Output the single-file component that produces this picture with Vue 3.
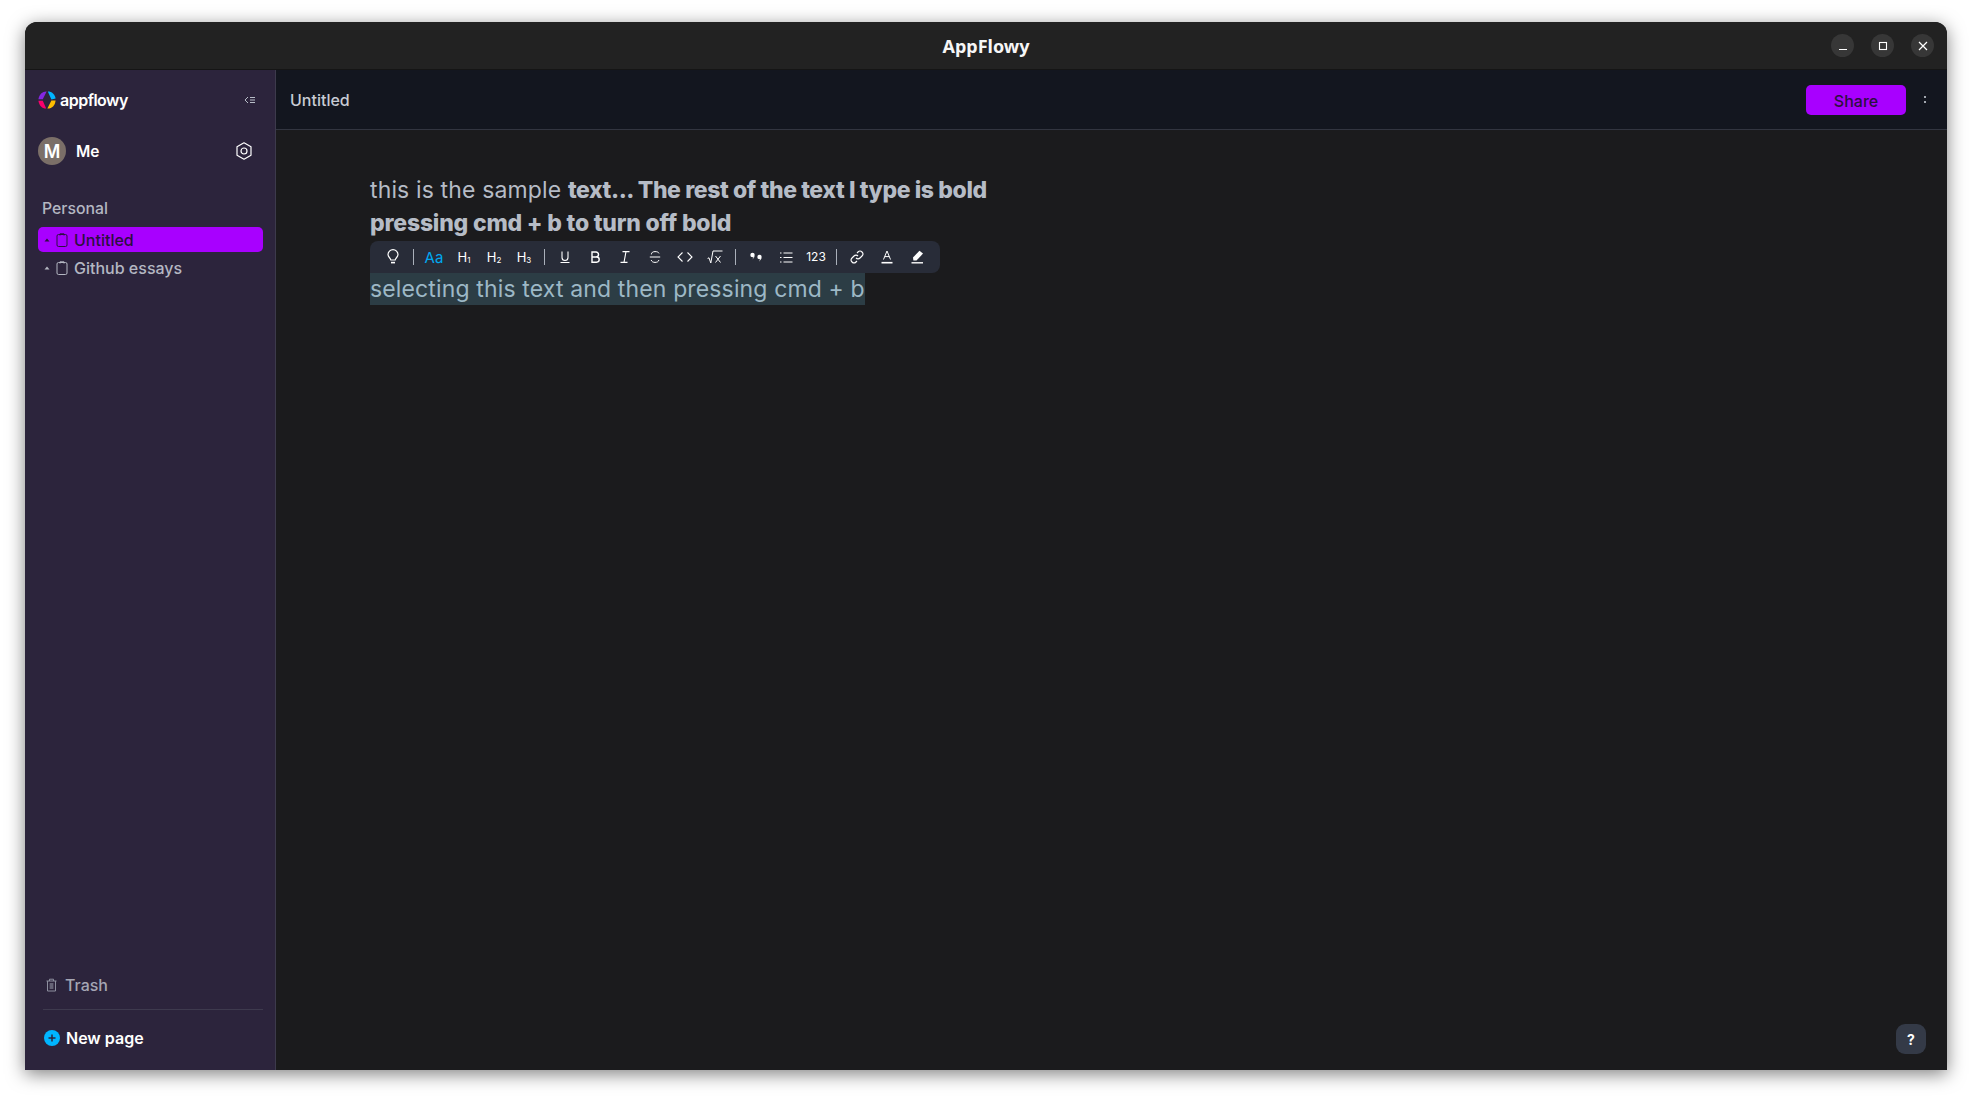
<script setup>
const pages = [
  { name: 'Untitled', active: true },
  { name: 'Github essays', active: false }
]
</script>

<template>
  <div class="desk">
    <div class="window">
      <header class="titlebar">
        <span class="app-title">AppFlowy</span>
        <div class="win-controls">
          <button class="win-btn"><svg width="16" height="16" viewBox="0 0 16 16"><path d="M4 11.5h8" stroke="#fff" stroke-width="1.2"/></svg></button>
          <button class="win-btn"><svg width="16" height="16" viewBox="0 0 16 16"><rect x="4.5" y="4.5" width="7" height="7" fill="none" stroke="#fff" stroke-width="1.1"/></svg></button>
          <button class="win-btn"><svg width="16" height="16" viewBox="0 0 16 16"><path d="M4 4l8 8M12 4l-8 8" stroke="#fff" stroke-width="1.2"/></svg></button>
        </div>
      </header>
      <div class="body">
        <aside class="sidebar">
          <div class="brand-row">
            <div class="brand">
              <svg width="18" height="18" viewBox="0 0 18 18">
                <path d="M8.600 .4 C4.600 .2 1.200 3 .4 8.200 L4.800 8.200 Z" fill="#8427e0"/>
                <path d="M9.800 .4 C13.800 .4 17 3 17.600 7.600 L13.400 8.400 Z" fill="#00b5ff"/>
                <path d="M.4 9.800 L4.800 9.800 L8.200 17.600 C4.400 17.800 1.200 15 .4 9.800 Z" fill="#fb006d"/>
                <path d="M17.600 9.600 C17 15 13.800 17.800 9.400 17.600 L13.400 9.600 Z" fill="#ffbd00"/>
              </svg>
              <span class="brand-name">appflowy</span>
            </div>
            <svg class="collapse" width="12" height="10" viewBox="0 0 12 10" fill="none" stroke="#b8bec8" stroke-width="1">
              <path d="M4 2 L1 5 L4 8M6 2.500h5M6 5h5M6 7.500h5"/>
            </svg>
          </div>
          <div class="user-row">
            <div class="avatar">M</div>
            <span class="user-name">Me</span>
            <svg class="gear" width="18" height="20" viewBox="0 0 18 20" fill="none" stroke="#fff" stroke-width="1.200">
              <path d="M9 1.800 L16 5.800 V14.200 L9 18.200 L2 14.200 V5.800 Z" stroke-linejoin="round"/>
              <circle cx="9" cy="10" r="3"/>
            </svg>
          </div>
          <div class="section">Personal</div>
          <div class="pages">
            <div v-for="p in pages" :key="p.name" class="page" :class="{ active: p.active }">
              <svg class="caret" width="6" height="4" viewBox="0 0 6 4"><path d="M3 0.500L5.500 3.500H.5Z" fill="currentColor"/></svg>
              <svg class="doc" width="12" height="14" viewBox="0 0 12 14" fill="none" stroke="currentColor" stroke-width="1">
                <rect x="1" y="1.500" width="10" height="12" rx="1.500"/>
                <path d="M4 2.500V.8h4v1.700" />
              </svg>
              <span>{{ p.name }}</span>
            </div>
          </div>
          <div class="side-foot">
            <div class="trash">
              <svg width="11" height="14" viewBox="0 0 11 14" fill="none" stroke="#8d8f9f" stroke-width="1">
                <path d="M.5 3h10M3.500 3V1.200h4V3M1.500 3v10h8V3"/>
                <rect x="3.600" y="5" width="3.800" height="6" fill="#8d8f9f" stroke="none" opacity=".6"/>
              </svg>
              <span>Trash</span>
            </div>
            <div class="foot-line"></div>
            <div class="new-page">
              <svg width="16" height="16" viewBox="0 0 16 16">
                <circle cx="8" cy="8" r="8" fill="#00b5ff"/>
                <path d="M8 4.500v7M4.500 8h7" stroke="#2c243c" stroke-width="1.500"/>
              </svg>
              <span>New page</span>
            </div>
          </div>
        </aside>
        <main class="main">
          <div class="topbar">
            <span class="doc-title">Untitled</span>
            <div class="top-actions">
              <button class="share">Share</button>
              <svg width="4" height="10" viewBox="0 0 4 10"><circle cx="2" cy="2" r="1.100" fill="#c8ccd4"/><circle cx="2" cy="7" r="1.100" fill="#c8ccd4"/></svg>
            </div>
          </div>
          <div class="editor">
            <div class="text-block">
              <p>this is the sample <b>text... The rest of the text I type is bold <span class="line-two">pressing cmd + b to turn off bold</span></b></p>
              <p class="blank"></p>
              <p><span class="sel">selecting this text and then pressing cmd + b</span></p>
              <div class="toolbar">
                <span class="tb tb-bulb"><svg width="14" height="16" viewBox="0 0 14 16" fill="none" stroke="#fff" stroke-width="1.200"><path d="M4.800 11 C4.600 9 2 8.200 2 5.600 A5 5 0 0 1 12 5.600 C12 8.200 9.400 9 9.200 11 Z"/><path d="M5 13.600h4" stroke-width="1.600"/></svg></span>
                <span class="sep"></span>
                <span class="tb t-aa">Aa</span>
                <span class="tb t-h">H<small>1</small></span>
                <span class="tb t-h">H<small>2</small></span>
                <span class="tb t-h">H<small>3</small></span>
                <span class="sep"></span>
                <span class="tb"><svg width="12" height="14" viewBox="0 0 12 14" fill="none" stroke="#fff" stroke-width="1.100"><path d="M3 1.500v6a3 3 0 0 0 6 0v-6M1.500 12.500h9"/></svg></span>
                <span class="tb"><svg width="12" height="14" viewBox="0 0 12 14" fill="none" stroke="#fff" stroke-width="1.400"><path d="M3 2h4a2.500 2.500 0 0 1 0 5H3ZM3 7h4.600a2.600 2.600 0 0 1 0 5.200H3Z"/></svg></span>
                <span class="tb"><svg width="12" height="14" viewBox="0 0 12 14" fill="none" stroke="#fff" stroke-width="1.100"><path d="M3.500 1.600h7M1.500 12.400h7M7 1.600 5 12.400"/></svg></span>
                <span class="tb"><svg width="12" height="14" viewBox="0 0 12 14" fill="none" stroke="#fff" stroke-width="1"><path d="M10 3.400C9.400 2 8 1.600 6 1.600 4 1.600 2.400 2.400 2.400 4.400M.8 7h10.400M2.200 10c.4 1.600 2 2.400 3.800 2.400 2 0 3.800-.8 3.800-2.400"/></svg></span>
                <span class="tb"><svg width="16" height="12" viewBox="0 0 16 12" fill="none" stroke="#fff" stroke-width="1.100"><path d="M5.500 1.500 1 6l4.500 4.500M10.500 1.500 15 6l-4.500 4.500"/></svg></span>
                <span class="tb"><svg width="16" height="14" viewBox="0 0 16 14" fill="none" stroke="#fff" stroke-width="1"><path d="M.6 8.500 2 7.800l1.800 5.200L6 1h9.500M8.500 6l5 6.500M13.500 6l-5 6.500"/></svg></span>
                <span class="sep"></span>
                <span class="tb"><svg width="14" height="10" viewBox="0 0 14 10" fill="#fff"><circle cx="3.500" cy="3" r="2.200"/><path d="M4.800 4 3.500 7.500 5.600 4.800Z"/><circle cx="10.500" cy="5" r="2.200"/><path d="M11.600 6 10 9.800 12.500 6.500Z"/></svg></span>
                <span class="tb"><svg width="13" height="11" viewBox="0 0 13 11" fill="none" stroke="#fff"><path d="M3.500 1h9M3.500 5.500h9M3.500 10h9"/><path d="M0 1h1.500M0 5.500h1.500M0 10h1.500"/></svg></span>
                <span class="tb t-num">123</span>
                <span class="sep"></span>
                <span class="tb"><svg width="14" height="14" viewBox="0 0 14 14" fill="none" stroke="#fff" stroke-width="1.100"><path d="M6 8a2.800 2.800 0 0 0 4 0l2-2a2.800 2.800 0 0 0-4-4L7 3"/><path d="M8 6a2.800 2.800 0 0 0-4 0l-2 2a2.800 2.800 0 0 0 4 4l1-1"/></svg></span>
                <span class="tb"><svg width="14" height="14" viewBox="0 0 14 14" fill="none" stroke="#fff" stroke-width="1"><path d="M3.500 9.500 7 1l3.500 8.500M4.800 6.600h4.400"/><path d="M1.500 12.700h11" stroke-width="1.600"/></svg></span>
                <span class="tb"><svg width="14" height="14" viewBox="0 0 14 14"><path d="M9.500.8 13 3.600 6.500 10.400H3.400L3 7.400Z" fill="#fff"/><path d="M1.500 12.800h11.500" stroke="#fff" stroke-width="1.400"/></svg></span>
              </div>
            </div>
          </div>
          <button class="help">?</button>
        </main>
      </div>
    </div>
  </div>
</template>

<style scoped>
.desk {
  width: 1972px;
  height: 1098px;
  padding: 22px 25px 28px;
  box-sizing: border-box;
  background: #fff;
  font-family: "Inter", "Noto Sans", sans-serif;
}
.window {
  height: 1048px;
  display: flex;
  flex-direction: column;
  border-radius: 12px 12px 0 0;
  overflow: hidden;
  box-shadow: 0 4px 18px rgba(0, 0, 0, 0.5);
  background: #1b1b1d;
}
.titlebar {
  height: 47px;
  flex: none;
  background: #222222;
  position: relative;
  display: flex;
  align-items: center;
  justify-content: center;
  border-bottom: 1px solid #151515;
}
.app-title {
  color: #f6f6f6;
  font-family: "Noto Sans", sans-serif;
  font-weight: 700;
  font-size: 18px;
}
.win-controls {
  position: absolute;
  right: 13px;
  top: 12px;
  display: flex;
  gap: 17px;
}
.win-btn {
  width: 23px;
  height: 23px;
  padding: 0;
  border: 0;
  border-radius: 50%;
  background: #373737;
  display: flex;
  align-items: center;
  justify-content: center;
}
.body {
  flex: 1;
  display: flex;
  min-height: 0;
}
.sidebar {
  width: 251px;
  flex: none;
  box-sizing: border-box;
  background: #2c243c;
  border-right: 1px solid #3d3a4c;
  display: flex;
  flex-direction: column;
  padding: 0 12px 0 13px;
}
.brand-row {
  height: 60px;
  display: flex;
  align-items: center;
  justify-content: space-between;
  padding: 0 7px 4px 0;
}
.brand {
  display: flex;
  align-items: center;
  gap: 4px;
}
.brand-name {
  color: #fff;
  font-size: 16px;
  font-weight: 600;
  letter-spacing: -0.5px;
}
.user-row {
  display: flex;
  align-items: center;
  height: 28px;
  margin-top: 3px;
}
.avatar {
  width: 28px;
  height: 28px;
  border-radius: 50%;
  background: #7b6f68;
  color: #fff;
  font-size: 18px;
  font-weight: 600;
  display: flex;
  align-items: center;
  justify-content: center;
}
.user-name {
  color: #fff;
  font-weight: 600;
  font-size: 15.500px;
  margin-left: 10px;
  flex: 1;
}
.gear {
  margin-right: 10px;
}
.section {
  color: #b4b7c2;
  font-size: 15.800px;
  font-weight: 500;
  margin: 33px 0 0 4px;
  line-height: 22px;
}
.pages {
  margin-top: 7px;
  display: flex;
  flex-direction: column;
  gap: 3px;
}
.page {
  height: 25px;
  display: flex;
  align-items: center;
  border-radius: 5px;
  padding-left: 6px;
  color: #b4b7c2;
  font-size: 16px;
  font-weight: 500;
}
.page.active {
  background: #a800ff;
  color: #2c1040;
}
.caret {
  flex: none;
}
.doc {
  margin: 0 6px;
  flex: none;
}
.side-foot {
  margin-top: auto;
}
.trash {
  display: flex;
  align-items: center;
  gap: 8px;
  color: #a5a6b4;
  font-size: 16px;
  font-weight: 500;
  padding-left: 8px;
  height: 24px;
}
.foot-line {
  height: 1px;
  background: #3e3a4e;
  margin: 12px 0 0 5px;
  width: 220px;
}
.new-page {
  display: flex;
  align-items: center;
  gap: 6px;
  color: #fff;
  font-weight: 600;
  font-size: 16px;
  height: 60px;
  box-sizing: border-box;
  padding: 0 0 4px 6px;
}
.main {
  flex: 1;
  position: relative;
  display: flex;
  flex-direction: column;
  min-width: 0;
}
.topbar {
  height: 60px;
  flex: none;
  box-sizing: border-box;
  background: #13161f;
  border-bottom: 1px solid #323540;
  display: flex;
  align-items: center;
  justify-content: space-between;
  padding: 0 20px 0 14px;
}
.doc-title {
  color: #c8ccd4;
  font-size: 16px;
  font-weight: 500;
  padding-top: 1px;
}
.top-actions {
  display: flex;
  align-items: center;
  gap: 17px;
}
.share {
  width: 100px;
  height: 30px;
  border: 0;
  border-radius: 5px;
  background: #a800ff;
  color: #2c1040;
  font-family: inherit;
  font-weight: 500;
  font-size: 16px;
  padding-top: 4px;
}
.editor {
  flex: 1;
  padding: 44px 0 0 94px;
}
.text-block {
  position: relative;
  width: 640px;
  color: #b6bcc6;
  font-size: 23px;
  line-height: 33px;
  letter-spacing: 0.14px;
}
.text-block p {
  margin: 0;
}
.text-block b {
  font-weight: 800;
  letter-spacing: -0.4px;
}
.text-block .line-two {
  letter-spacing: -0.2px;
}
.blank {
  height: 33px;
}
.sel {
  background: #2c3d45;
  color: #9db8c6;
  display: inline-block;
  height: 32px;
}
.toolbar {
  position: absolute;
  left: 0;
  top: 67px;
  height: 32px;
  width: 570px;
  box-sizing: border-box;
  background: #282c38;
  border-radius: 8px 8px 8px 0;
  display: flex;
  align-items: center;
  padding-left: 8px;
  color: #fff;
  line-height: 1;
  letter-spacing: 0;
}
.tb {
  width: 30px;
  flex: none;
  display: flex;
  align-items: center;
  justify-content: center;
  font-size: 13px;
  font-weight: 400;
}
.sep {
  width: 1px;
  height: 16px;
  flex: none;
  margin: 0 5px;
  background: #aab0ba;
}
.t-aa {
  color: #00a8f0;
  font-size: 15px;
  font-weight: 400;
}
.t-h small {
  font-size: 8px;
  align-self: flex-end;
}
.t-num {
  font-size: 12px;
}
.help {
  position: absolute;
  right: 21px;
  bottom: 16px;
  width: 30px;
  height: 30px;
  padding: 0;
  border: 0;
  border-radius: 9px;
  background: #343a47;
  color: #fff;
  font-family: inherit;
  font-size: 14px;
  font-weight: 700;
}
</style>
